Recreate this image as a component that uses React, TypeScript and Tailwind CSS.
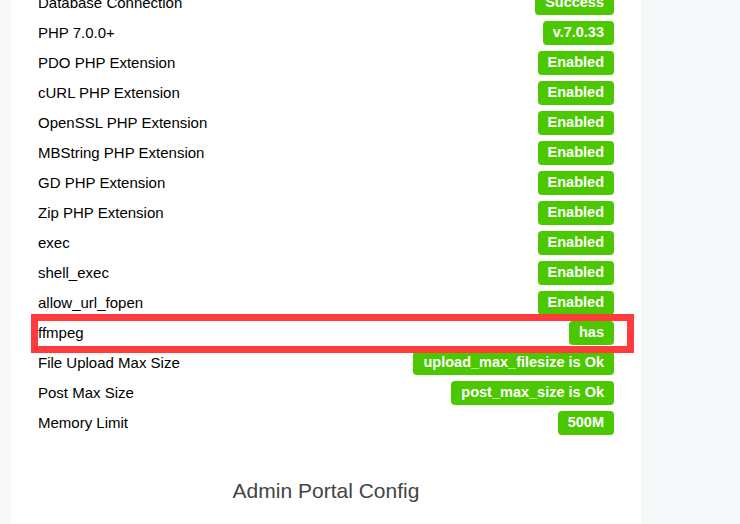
import React from "react";

const rows: [string, string][] = [
  ["Database Connection", "Success"],
  ["PHP 7.0.0+", "v.7.0.33"],
  ["PDO PHP Extension", "Enabled"],
  ["cURL PHP Extension", "Enabled"],
  ["OpenSSL PHP Extension", "Enabled"],
  ["MBString PHP Extension", "Enabled"],
  ["GD PHP Extension", "Enabled"],
  ["Zip PHP Extension", "Enabled"],
  ["exec", "Enabled"],
  ["shell_exec", "Enabled"],
  ["allow_url_fopen", "Enabled"],
  ["ffmpeg", "has"],
  ["File Upload Max Size", "upload_max_filesize is Ok"],
  ["Post Max Size", "post_max_size is Ok"],
  ["Memory Limit", "500M"],
];

export default function App() {
  return (
    <div
      className="w-[740px] h-[524px] overflow-hidden bg-[#f7f8fa] pl-[11px] flex"
      style={{ fontFamily: '"Liberation Sans", Arial, sans-serif' }}
    >
      <div className="relative w-[630px] h-full bg-white px-[27px]">
        <div className="mt-[-12px] flex flex-col">
          {rows.map(([label, value]) => (
            <div key={label} className="h-[30px] flex items-center justify-between">
              <span className="text-[15px] text-black">{label}</span>
              <span className="h-[24px] flex items-center rounded-[4px] bg-[#4cc800] px-[10px] text-[14.5px] font-bold text-white">
                {value}
              </span>
            </div>
          ))}
        </div>
        <h2 className="mt-[39px] text-center text-[21px] leading-[28px] text-[#444]">
          Admin Portal Config
        </h2>
        <div className="absolute left-[20px] top-[314px] w-[603px] h-[39px] border-[7px] border-[#ff3a3a]" />
      </div>
    </div>
  );
}
